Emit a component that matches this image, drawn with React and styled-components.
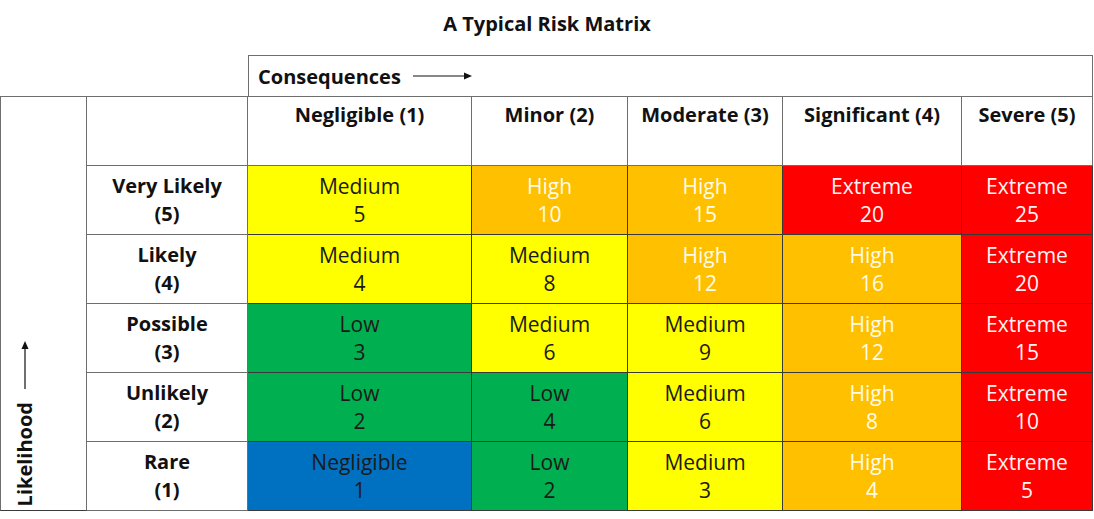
import React from "react";
import styled, { createGlobalStyle } from "styled-components";

const Global = createGlobalStyle`
  html, body { margin: 0; padding: 0; background: #ffffff; }
  body { font-family: "Open Sans", "Liberation Sans", sans-serif; color: #111; }
  * { box-sizing: border-box; }
`;

const BOLD = "20px";
const REG = "21px";

const Page = styled.div`
  width: 1094px;
  display: flex;
  flex-direction: column;
`;

const Title = styled.h1`
  margin: 0;
  height: 55px;
  line-height: 47px;
  text-align: center;
  font-size: ${BOLD};
  font-weight: 700;
  color: #111;
`;

const Matrix = styled.div`
  display: grid;
  grid-template-columns: 87px 161px 224px 156px 155px 179px 131px;
  grid-template-rows: 41px 70px repeat(5, 69px);
`;

const LINE = "#3a3a3a";
const GREY = "#6e6e6e";

const Spacer = styled.div`
  grid-column: 1 / 3;
`;

const ConsequenceBar = styled.div`
  grid-column: 3 / 8;
  border-top: 1px solid ${GREY};
  border-left: 1px solid ${GREY};
  border-right: 1px solid ${GREY};
  display: flex;
  align-items: center;
  gap: 12px;
  padding: 0 0 0 9px;
  font-weight: 700;
  font-size: ${BOLD};
`;

const LikelihoodCol = styled.div`
  grid-column: 1;
  grid-row: 2 / 8;
  border: 1px solid ${GREY};
  border-bottom-color: ${LINE};
  display: flex;
  flex-direction: column;
  justify-content: flex-end;
  align-items: center;
  gap: 13px;
  padding: 0 37px 4px 0;
`;

const Vertical = styled.span`
  writing-mode: vertical-rl;
  transform: rotate(180deg);
  font-weight: 700;
  font-size: ${BOLD};
  line-height: 22px;
`;

const Cell = styled.div`
  border-right: 1px solid ${(p) => (p.$dark ? LINE : GREY)};
  border-bottom: 1px solid ${(p) => (p.$dark ? LINE : GREY)};
  ${(p) => (p.$top ? `border-top: 1px solid ${GREY};` : "")}
  background: ${(p) => p.$bg || "#ffffff"};
  color: ${(p) => p.$fg || "#111"};
  display: flex;
  flex-direction: column;
  align-items: center;
  justify-content: ${(p) => (p.$head ? "flex-start" : "center")};
  padding-top: ${(p) => (p.$head ? "6px" : "0")};
  text-align: center;
  font-size: ${(p) => (p.$bold ? BOLD : REG)};
  font-weight: ${(p) => (p.$bold ? 700 : 400)};
  line-height: ${(p) => (p.$head ? "24px" : "28.5px")};
`;

const Line = styled.span`
  display: block;
  white-space: nowrap;
`;

const COLORS = {
  Negligible: { bg: "#0070C0", fg: "#1a1a1a" },
  Low: { bg: "#00B050", fg: "#1a1a1a" },
  Medium: { bg: "#FFFF00", fg: "#1a1a1a" },
  High: { bg: "#FFC000", fg: "#fffbe8" },
  Extreme: { bg: "#FF0000", fg: "#fff4f4" },
};

const headers = ["Negligible (1)", "Minor (2)", "Moderate (3)", "Significant (4)", "Severe (5)"];

const rows = [
  { label: "Very Likely", n: 5, cells: ["Medium", "High", "High", "Extreme", "Extreme"] },
  { label: "Likely", n: 4, cells: ["Medium", "Medium", "High", "High", "Extreme"] },
  { label: "Possible", n: 3, cells: ["Low", "Medium", "Medium", "High", "Extreme"] },
  { label: "Unlikely", n: 2, cells: ["Low", "Low", "Medium", "High", "Extreme"] },
  { label: "Rare", n: 1, cells: ["Negligible", "Low", "Medium", "High", "Extreme"] },
];

const HArrow = () => (
  <svg width="60" height="10" viewBox="0 0 60 10">
    <line x1="0" y1="5" x2="52" y2="5" stroke="#111" strokeWidth="1.2" />
    <polygon points="59,5 51,1.5 51,8.5" fill="#111" />
  </svg>
);

const VArrow = () => (
  <svg width="10" height="48" viewBox="0 0 10 48">
    <line x1="5" y1="48" x2="5" y2="7" stroke="#111" strokeWidth="1.2" />
    <polygon points="5,0 1.5,8 8.5,8" fill="#111" />
  </svg>
);

export default function App() {
  return (
    <Page>
      <Global />
      <Title>A Typical Risk Matrix</Title>
      <Matrix>
        <Spacer />
        <ConsequenceBar>
          <span>Consequences</span>
          <HArrow />
        </ConsequenceBar>
        <LikelihoodCol>
          <VArrow />
          <Vertical>Likelihood</Vertical>
        </LikelihoodCol>
        <Cell $top $head />
        {headers.map((h) => (
          <Cell key={h} $top $head $bold>
            <Line>{h}</Line>
          </Cell>
        ))}
        {rows.map((r) => (
          <React.Fragment key={r.label}>
            <Cell $bold>
              <Line>{r.label}</Line>
              <Line>({r.n})</Line>
            </Cell>
            {r.cells.map((c, i) => {
              const score = r.n * (i + 1);
              return (
                <Cell key={i} $dark $bg={COLORS[c].bg} $fg={COLORS[c].fg}>
                  <Line>{c}</Line>
                  <Line>{score}</Line>
                </Cell>
              );
            })}
          </React.Fragment>
        ))}
      </Matrix>
    </Page>
  );
}
